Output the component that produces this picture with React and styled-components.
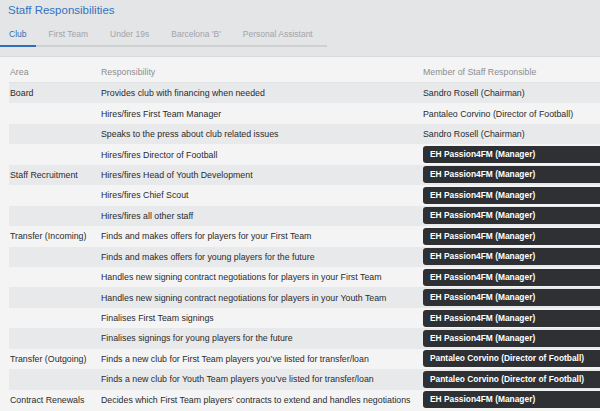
import React from "react";
import styled, { createGlobalStyle } from "styled-components";

const GlobalStyle = createGlobalStyle`
  html, body { margin: 0; padding: 0; }
  body {
    width: 600px;
    height: 411px;
    overflow: hidden;
    background: #f4f4f5;
    font-family: "Liberation Sans", Arial, sans-serif;
  }
`;

const tabs = ["Club", "First Team", "Under 19s", "Barcelona 'B'", "Personal Assistant"];

const rows = [
  ["Board", "Provides club with financing when needed", "Sandro Rosell (Chairman)", false],
  ["", "Hires/fires First Team Manager", "Pantaleo Corvino (Director of Football)", false],
  ["", "Speaks to the press about club related issues", "Sandro Rosell (Chairman)", false],
  ["", "Hires/fires Director of Football", "EH Passion4FM (Manager)", true],
  ["Staff Recruitment", "Hires/fires Head of Youth Development", "EH Passion4FM (Manager)", true],
  ["", "Hires/fires Chief Scout", "EH Passion4FM (Manager)", true],
  ["", "Hires/fires all other staff", "EH Passion4FM (Manager)", true],
  ["Transfer (Incoming)", "Finds and makes offers for players for your First Team", "EH Passion4FM (Manager)", true],
  ["", "Finds and makes offers for young players for the future", "EH Passion4FM (Manager)", true],
  ["", "Handles new signing contract negotiations for players in your First Team", "EH Passion4FM (Manager)", true],
  ["", "Handles new signing contract negotiations for players in your Youth Team", "EH Passion4FM (Manager)", true],
  ["", "Finalises First Team signings", "EH Passion4FM (Manager)", true],
  ["", "Finalises signings for young players for the future", "EH Passion4FM (Manager)", true],
  ["Transfer (Outgoing)", "Finds a new club for First Team players you\u2019ve listed for transfer/loan", "Pantaleo Corvino (Director of Football)", true],
  ["", "Finds a new club for Youth Team players you\u2019ve listed for transfer/loan", "Pantaleo Corvino (Director of Football)", true],
  ["Contract Renewals", "Decides which First Team players\u2019 contracts to extend and handles negotiations", "EH Passion4FM (Manager)", true],
];

export default function App() {
  return (
    <>
      <GlobalStyle />
      <Page>
        <Header>
          <Title>Staff Responsibilities</Title>
          <TabBar>
            {tabs.map((t, i) => (
              <Tab key={t} $active={i === 0}>{t}</Tab>
            ))}
          </TabBar>
        </Header>
        <Table>
          <HeadRow>
            <Cell>Area</Cell>
            <Cell>Responsibility</Cell>
            <Cell $who>Member of Staff Responsible</Cell>
          </HeadRow>
          {rows.map(([area, resp, who, editable], i) => (
            <Row key={i} $shaded={i % 2 === 0}>
              <Cell>{area}</Cell>
              <Cell>{resp}</Cell>
              {editable ? <Badge>{who}</Badge> : <Cell $who>{who}</Cell>}
            </Row>
          ))}
        </Table>
      </Page>
    </>
  );
}

const Page = styled.div`
  display: flex;
  flex-direction: column;
  height: 411px;
`;

const Header = styled.div`
  background: #e4e5e7;
  border-bottom: 1px solid #d9dadc;
  padding-top: 3px;
  height: 57px;
  box-sizing: border-box;
`;

const Title = styled.div`
  margin-left: 8px;
  font-size: 11.5px;
  color: #3273c0;
  line-height: 15px;
`;

const TabBar = styled.div`
  display: flex;
  width: 327px;
  margin-top: 11px;
  border-bottom: 2px solid #cfd0d2;
`;

const Tab = styled.div`
  padding: 0 10px 5px 9px;
  margin-right: 3px;
  margin-bottom: -2px;
  font-size: 8.5px;
  line-height: 11px;
  white-space: nowrap;
  color: ${(p) => (p.$active ? "#2f6fba" : "#a2a4a7")};
  border-bottom: 2px solid ${(p) => (p.$active ? "#2f6fba" : "transparent")};
`;

const Table = styled.div`
  display: flex;
  flex-direction: column;
  padding: 5px 0 0 9px;
`;

const RowBase = styled.div`
  display: grid;
  grid-template-columns: 91px 323px 1fr;
  align-items: center;
  font-size: 8.8px;
  color: #2a2b2d;
`;

const HeadRow = styled(RowBase)`
  height: 20px;
  color: #8c8e91;
  border-bottom: 1px solid #e1e2e4;
`;

const Row = styled(RowBase)`
  height: 20.45px;
  background: ${(p) => (p.$shaded ? "#e8e9ea" : "transparent")};
`;

const Cell = styled.div`
  padding-left: ${(p) => (p.$who ? "0" : "1px")};
  white-space: nowrap;
`;

const Badge = styled.div`
  height: 17px;
  line-height: 17px;
  margin-right: -6px;
  padding-left: 7px;
  background: #2e3034;
  color: #ffffff;
  font-size: 8.4px;
  font-weight: bold;
  border-radius: 3px;
  white-space: nowrap;
`;
